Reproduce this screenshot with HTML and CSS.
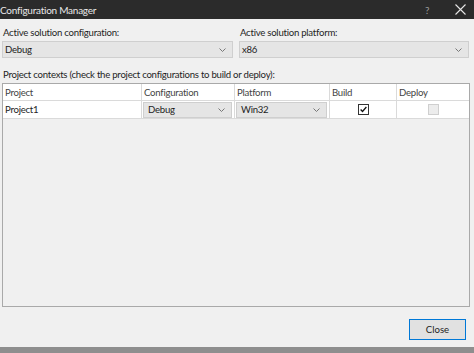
FILE: index.html
```html
<!DOCTYPE html>
<html>
<head>
<meta charset="utf-8">
<link rel="stylesheet" href="styles.css">
</head>
<body>
<div class="window">
  <div class="titlebar">
    <span class="title">Configuration Manager</span>
    <span class="help">?</span>
    <span class="close-x">
      <svg width="11" height="11" viewBox="0 0 11 11"><path d="M0.5 0.5L10.5 10.5M10.5 0.5L0.5 10.5" stroke="#e6e6e6" stroke-width="1.1"/></svg>
    </span>
  </div>
  <div class="body">
    <div class="top">
      <div class="field">
        <div class="label">Active solution configuration:</div>
        <div class="combo"><span>Debug</span><svg class="chev" width="7" height="4" viewBox="0 0 7 4"><path d="M0.5 0.5L3.5 3.5L6.5 0.5" fill="none" stroke="#777" stroke-width="1"/></svg></div>
      </div>
      <div class="field">
        <div class="label">Active solution platform:</div>
        <div class="combo"><span>x86</span><svg class="chev" width="7" height="4" viewBox="0 0 7 4"><path d="M0.5 0.5L3.5 3.5L6.5 0.5" fill="none" stroke="#777" stroke-width="1"/></svg></div>
      </div>
    </div>
    <div class="label ctx">Project contexts (check the project configurations to build or deploy):</div>
    <div class="grid">
      <div class="row head">
        <div class="cell c1">Project</div>
        <div class="cell c2">Configuration</div>
        <div class="cell c3">Platform</div>
        <div class="cell c4">Build</div>
        <div class="cell c5">Deploy</div>
      </div>
      <div class="row data">
        <div class="cell c1">Project1</div>
        <div class="cell c2"><div class="mini"><span>Debug</span><svg class="chev" width="7" height="4" viewBox="0 0 7 4"><path d="M0.5 0.5L3.5 3.5L6.5 0.5" fill="none" stroke="#777" stroke-width="1"/></svg></div></div>
        <div class="cell c3"><div class="mini"><span>Win32</span><svg class="chev" width="7" height="4" viewBox="0 0 7 4"><path d="M0.5 0.5L3.5 3.5L6.5 0.5" fill="none" stroke="#777" stroke-width="1"/></svg></div></div>
        <div class="cell c4 center"><span class="check on"><svg width="11" height="11" viewBox="0 0 11 11"><path d="M2 5.5L4.3 8L9 2.5" fill="none" stroke="#111" stroke-width="1.6"/></svg></span></div>
        <div class="cell c5 center"><span class="check off"></span></div>
      </div>
    </div>
    <div class="footer">
      <button class="btn">Close</button>
    </div>
  </div>
  <div class="taskbar"></div>
</div>
</body>
</html>
```
FILE: styles.css
```css
* { box-sizing: border-box; }
html, body { margin: 0; padding: 0; }
body {
  width: 474px;
  height: 353px;
  overflow: hidden;
  font-family: Lato, "Open Sans", sans-serif;
  font-size: 9.6px;
  letter-spacing: -0.25px;
  color: #1e1e1e;
  background: #f0f0f0;
}
.window {
  display: flex;
  flex-direction: column;
  height: 353px;
}
.titlebar {
  height: 19px;
  background: #2b2b2b;
  color: #e8e8e8;
  display: flex;
  align-items: center;
  font-size: 10px;
}
.title { flex: 1; margin-left: 0; }
.help { width: 20px; color: #9a9a9a; font-size: 10px; margin-right: 13px; text-align: center; }
.close-x { width: 20px; display: flex; justify-content: center; margin-right: 4px; }
.body {
  flex: 1;
  display: flex;
  flex-direction: column;
  padding: 6px 4px 0 2px;
  background: #f0f0f0;
}
.top {
  display: grid;
  grid-template-columns: 231px 230px;
  column-gap: 6px;
}
.label { height: 15px; line-height: 15px; padding-left: 1px; color: #1e1e1e; }
.field .label { margin-bottom: 1px; }
.combo {
  height: 17px;
  background: #e5e5e5;
  border: 1px solid #cfcfcf;
  display: flex;
  align-items: center;
  padding: 0 6px 0 2px;
}
.combo span, .mini span { flex: 1; }
.chev { flex: none; }
.ctx { margin-top: 9px; margin-bottom: 1px; }
.grid {
  width: 468px;
  height: 224px;
  border: 1px solid #a9a9a9;
  background: #f0f0f0;
}
.row { display: flex; height: 17px; }
.row.data { height: 18px; }
.cell {
  border-right: 1px solid #dadada;
  border-bottom: 1px solid #dadada;
  background: #fff;
  display: flex;
  align-items: center;
  padding-left: 2px;
}
.head .cell { color: #444; }
.c1 { width: 139px; }
.c2 { width: 93px; }
.c3 { width: 95px; }
.c4 { width: 67px; }
.c5 { width: 72px; border-right: none; }
.center { justify-content: center; padding-left: 0; }
.data .c2, .data .c3 { padding: 1px 2px 1px 1px; }
.mini {
  width: 100%;
  height: 16px;
  background: #e5e5e5;
  border: 1px solid #cfcfcf;
  display: flex;
  align-items: center;
  padding: 0 6px 0 4px;
}
.check {
  width: 11px;
  height: 11px;
  border: 1px solid #333;
  background: #fff;
  display: flex;
  align-items: center;
  justify-content: center;
}
.check svg { width: 9px; height: 9px; }
.check.off { border-color: #cfcfcf; background: #ececec; }
.footer {
  flex: 1;
  display: flex;
  justify-content: flex-end;
  align-items: flex-start;
  padding-top: 12px;
  padding-right: 4px;
}
.btn {
  width: 57px;
  height: 21px;
  font: inherit;
  color: #1e1e1e;
  background: #e1e1e1;
  border: 1px solid #0078d7;
  padding: 0;
}
.taskbar {
  height: 6px;
  background: #8e8e8e;
}
```
